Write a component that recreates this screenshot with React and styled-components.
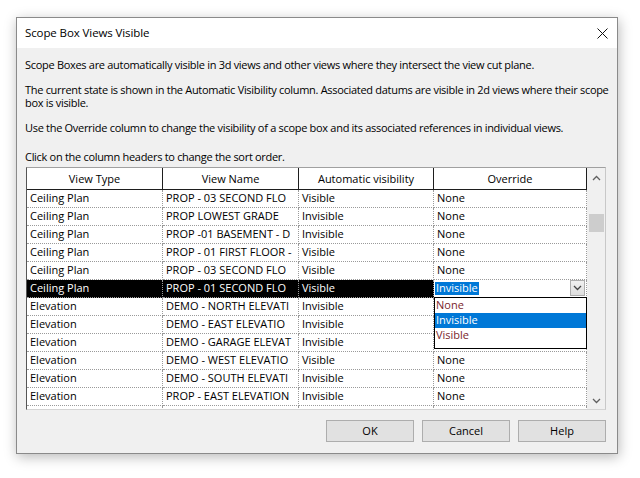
import React from 'react';
import styled, { createGlobalStyle } from 'styled-components';

const Global = createGlobalStyle`
  html, body { margin: 0; padding: 0; background: #ffffff; }
  body {
    font-family: "Open Sans", "Noto Sans", sans-serif;
    font-size: 11px;
    color: #000;
  }
  * { box-sizing: border-box; }
`;

const Desktop = styled.div`
  width: 640px;
  height: 478px;
  padding: 17px 0 0 16px;
  overflow: hidden;
`;

const Window = styled.div`
  width: 602px;
  height: 437px;
  border: 1px solid #8a8a8a;
  background: #f0f0f0;
  box-shadow: 1px 3px 12px rgba(0, 0, 0, 0.28);
  display: flex;
  flex-direction: column;
`;

const TitleBar = styled.div`
  height: 30px;
  flex: none;
  background: #fff;
  display: flex;
  align-items: stretch;
  justify-content: space-between;
  padding-left: 8px;
`;

const Title = styled.div`
  font-size: 11.5px;
  line-height: 30px;
  letter-spacing: -0.1px;
`;

const CloseButton = styled.div`
  width: 30px;
  display: flex;
  align-items: center;
  justify-content: center;
`;

const Body = styled.div`
  flex: 1;
  display: flex;
  flex-direction: column;
  padding: 10px 11px 11px 8px;
`;

const Para = styled.p`
  margin: 0 -6px ${(p) => p.$gap}px 0;
  line-height: 13px;
  letter-spacing: -0.3px;
`;

const Table = styled.div`
  margin-left: 1px;
  height: 243px;
  flex: none;
  display: flex;
  background: #fff;
  border-top: 1px solid #a0a0a0;
  border-left: 1px solid #555;
  border-right: 1px solid #c8c8c8;
  border-bottom: 1px solid #d4d4d4;
`;

const Grid = styled.div`
  width: 560px;
  display: flex;
  flex-direction: column;
`;

const HeaderRow = styled.div`
  display: flex;
  height: 22px;
  flex: none;
  border-bottom: 1px solid #1e1e1e;
`;

const HeaderCell = styled.div`
  width: ${(p) => p.$w}px;
  border-right: 1px solid #1e1e1e;
  text-align: center;
  line-height: 21px;
`;

const RowsArea = styled.div`
  flex: 1;
  overflow: hidden;
  position: relative;
`;

const Row = styled.div`
  display: flex;
  height: 18px;
`;

const Cell = styled.div`
  width: ${(p) => p.$w}px;
  height: 18px;
  flex: none;
  border-right: 1px dotted #9a9a9a;
  border-bottom: 1px dotted #9a9a9a;
  padding-left: 3px;
  line-height: 16px;
  white-space: nowrap;
  overflow: hidden;
  background: ${(p) => (p.$sel ? '#000' : '#fff')};
  color: ${(p) => (p.$sel ? '#fff' : '#000')};
`;

const EditCell = styled.div`
  width: ${(p) => p.$w}px;
  height: 18px;
  flex: none;
  position: relative;
  z-index: 2;
  border-right: 1px dotted #9a9a9a;
  border-bottom: 1px dotted #9a9a9a;
  padding-left: 1px;
  padding-right: 1px;
  background: #fff;
  display: flex;
  align-items: flex-start;
  justify-content: space-between;
`;

const Highlight = styled.span`
  margin-top: 2px;
  padding: 0 1px;
  line-height: 12px;
  height: 13px;
  background: #0078d7;
  color: #fff;
`;

const ComboButton = styled.div`
  width: 15px;
  height: 16px;
  border: 1px solid #adadad;
  background: linear-gradient(#f0f0f0, #dedede);
  display: flex;
  align-items: center;
  justify-content: center;
`;

const DropList = styled.div`
  position: absolute;
  top: 100%;
  left: 0;
  width: calc(100% + 1px);
  height: 52px;
  border: 1px solid #000;
  background: #fff;
`;

const DropItem = styled.div`
  height: 15px;
  line-height: 14px;
  padding-left: 1px;
  background: ${(p) => (p.$active ? '#0078d7' : 'transparent')};
  color: ${(p) => (p.$active ? '#fff' : '#7a1e2c')};
`;

const ScrollBar = styled.div`
  width: 18px;
  background: #f0f0f0;
  display: flex;
  flex-direction: column;
`;

const ScrollArrow = styled.div`
  height: ${(p) => p.$h}px;
  flex: none;
  display: flex;
  align-items: center;
  justify-content: center;
`;

const Track = styled.div`
  flex: 1;
  padding-top: 26px;
`;

const Thumb = styled.div`
  margin-left: 2px;
  width: 15px;
  height: 18px;
  background: #cdcdcd;
`;

const ButtonRow = styled.div`
  margin-top: 10px;
  display: flex;
  justify-content: flex-end;
  gap: 8px;
`;

const Button = styled.div`
  width: 88px;
  height: 22px;
  border: 1px solid #adadad;
  background: #e1e1e1;
  text-align: center;
  line-height: 19px;
`;

const widths = [136, 136, 135, 153];
const headers = ['View Type', 'View Name', 'Automatic visibility', 'Override'];

const rows = [
  ['Ceiling Plan', 'PROP - 03 SECOND FLO', 'Visible', 'None'],
  ['Ceiling Plan', 'PROP LOWEST GRADE', 'Invisible', 'None'],
  ['Ceiling Plan', 'PROP -01 BASEMENT - D', 'Invisible', 'None'],
  ['Ceiling Plan', 'PROP - 01 FIRST FLOOR -', 'Visible', 'None'],
  ['Ceiling Plan', 'PROP - 03 SECOND FLO', 'Visible', 'None'],
  ['Ceiling Plan', 'PROP - 01 SECOND FLO', 'Visible', 'Invisible', true],
  ['Elevation', 'DEMO - NORTH ELEVATI', 'Invisible', ''],
  ['Elevation', 'DEMO - EAST ELEVATIO', 'Invisible', ''],
  ['Elevation', 'DEMO - GARAGE ELEVAT', 'Invisible', ''],
  ['Elevation', 'DEMO - WEST ELEVATIO', 'Visible', 'None'],
  ['Elevation', 'DEMO - SOUTH ELEVATI', 'Invisible', 'None'],
  ['Elevation', 'PROP - EAST ELEVATION', 'Invisible', 'None'],
  ['', '', '', ''],
];

const Chevron = ({ up, color = '#606060' }) => (
  <svg width="9" height="6" viewBox="0 0 9 6">
    <polyline
      points={up ? '1,5 4.5,1.5 8,5' : '1,1 4.5,4.5 8,1'}
      fill="none"
      stroke={color}
      strokeWidth="1.3"
    />
  </svg>
);

export default function App() {
  return (
    <Desktop>
      <Global />
      <Window>
        <TitleBar>
          <Title>Scope Box Views Visible</Title>
          <CloseButton>
            <svg width="11" height="11" viewBox="0 0 11 11">
              <path d="M0.5 0.5 L10.5 10.5 M10.5 0.5 L0.5 10.5" stroke="#111" strokeWidth="1" />
            </svg>
          </CloseButton>
        </TitleBar>
        <Body>
          <Para $gap={12}>
            Scope Boxes are automatically visible in 3d views and other views where they intersect the view cut plane.
          </Para>
          <Para $gap={12}>
            The current state is shown in the Automatic Visibility column. Associated datums are visible in 2d views where their scope box is visible.
          </Para>
          <Para $gap={16}>
            Use the Override column to change the visibility of a scope box and its associated references in individual views.
          </Para>
          <Para $gap={4}>Click on the column headers to change the sort order.</Para>
          <Table>
            <Grid>
              <HeaderRow>
                {headers.map((h, i) => (
                  <HeaderCell key={h} $w={widths[i]}>{h}</HeaderCell>
                ))}
              </HeaderRow>
              <RowsArea>
                {rows.map((r, ri) => (
                  <Row key={ri}>
                    {r.slice(0, 3).map((c, ci) => (
                      <Cell key={ci} $w={widths[ci]} $sel={r[4]}>{c}</Cell>
                    ))}
                    {r[4] ? (
                      <EditCell $w={widths[3]}>
                        <Highlight>{r[3]}</Highlight>
                        <ComboButton>
                          <Chevron color="#444" />
                        </ComboButton>
                        <DropList>
                          <DropItem>None</DropItem>
                          <DropItem $active>Invisible</DropItem>
                          <DropItem>Visible</DropItem>
                        </DropList>
                      </EditCell>
                    ) : (
                      <Cell $w={widths[3]}>{r[3]}</Cell>
                    )}
                  </Row>
                ))}
              </RowsArea>
            </Grid>
            <ScrollBar>
              <ScrollArrow $h={20}>
                <Chevron up />
              </ScrollArrow>
              <Track>
                <Thumb />
              </Track>
              <ScrollArrow $h={17}>
                <Chevron />
              </ScrollArrow>
            </ScrollBar>
          </Table>
          <ButtonRow>
            <Button>OK</Button>
            <Button>Cancel</Button>
            <Button>Help</Button>
          </ButtonRow>
        </Body>
      </Window>
    </Desktop>
  );
}
